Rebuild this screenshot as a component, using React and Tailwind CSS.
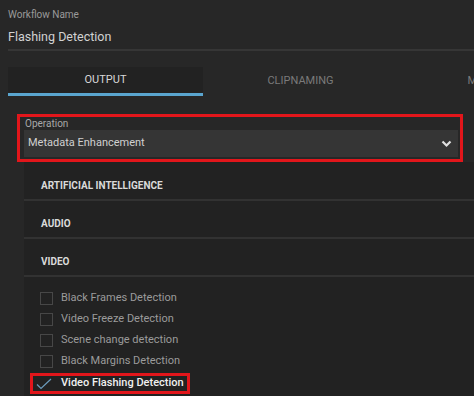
import React from 'react';

const sections = ['ARTIFICIAL INTELLIGENCE', 'AUDIO', 'VIDEO'];
const videoItems = [
  'Black Frames Detection',
  'Video Freeze Detection',
  'Scene change detection',
  'Black Margins Detection',
];

function App() {
  return (
    <div className="w-[474px] h-[396px] overflow-hidden bg-[#272727] font-['Roboto','Liberation_Sans',sans-serif]">
      <div className="pl-2 pt-[8px]">
        <div className="text-[10px] leading-[14px] text-[#9a9a9a]">Workflow Name</div>
        <div className="mt-[6px] text-[12.5px] leading-[18px] text-[#d2d2d2]">Flashing Detection</div>
        <div className="mt-[3px] h-[2px] bg-[#363636]" />
      </div>

      <div className="flex mt-[16px] ml-2">
        <div className="w-[195px] shrink-0 h-[29px] bg-[#222222] border-b-[3px] border-[#5aa5cf] flex items-center justify-center text-[11px] text-[#d8d8d8]">
          OUTPUT
        </div>
        <div className="w-[195px] shrink-0 h-[29px] flex items-center justify-center text-[11px] text-[#7a7a7a]">
          CLIPNAMING
        </div>
        <div className="w-[195px] shrink-0 h-[29px] flex items-center justify-center text-[11px] text-[#7a7a7a]">
          METADATA
        </div>
      </div>

      <div className="mt-[18px] ml-[17px] w-[446px] h-[48px] border-[3px] border-[#e2161b] pt-[1px]">
        <div className="pl-[5px] text-[10px] leading-[12px] text-[#a8a8a8]">Operation</div>
        <div className="ml-[4px] mr-[2px] h-[27px] bg-[#353535] flex items-center justify-between pl-[4px] pr-[6px]">
          <span className="text-[11px] text-[#d0d0d0]">Metadata Enhancement</span>
          <svg width="11" height="8" viewBox="0 0 11 8" fill="none">
            <path d="M1.5 1.5 L5.5 5.5 L9.5 1.5" stroke="#e0e0e0" strokeWidth="2.2" />
          </svg>
        </div>
      </div>

      <div className="ml-[24px] bg-[#222222] h-[240px] pt-[1px]">
        {sections.map((s) => (
          <div key={s} className="h-[38px] border-b-2 border-[#323232] flex items-end pb-[7px] pl-[17px] text-[10px] leading-[12px] font-bold text-[#dadada]">
            {s}
          </div>
        ))}
        <div className="pt-[11px] pl-[12px]">
          {videoItems.map((item) => (
            <div key={item} className="flex items-center h-[21px] pl-[4px]">
              <div className="w-[13px] h-[13px] border border-[#474747]" />
              <span className="ml-[8px] text-[11px] text-[#9b9b9b]">{item}</span>
            </div>
          ))}
          <div className="mt-[1px] -ml-[6px] w-[160px] h-[21px] border-[3px] border-[#e2161b] flex items-center pl-[3px] whitespace-nowrap">
            <svg width="16" height="12" viewBox="0 0 16 12" fill="none">
              <path d="M1 6.5 L5 10.5 L15 1" stroke="#6c9cbd" strokeWidth="1.2" />
            </svg>
            <span className="ml-[9px] text-[11px] font-medium text-[#f0f0f0]">Video Flashing Detection</span>
          </div>
        </div>
      </div>
    </div>
  );
}

export default App;
